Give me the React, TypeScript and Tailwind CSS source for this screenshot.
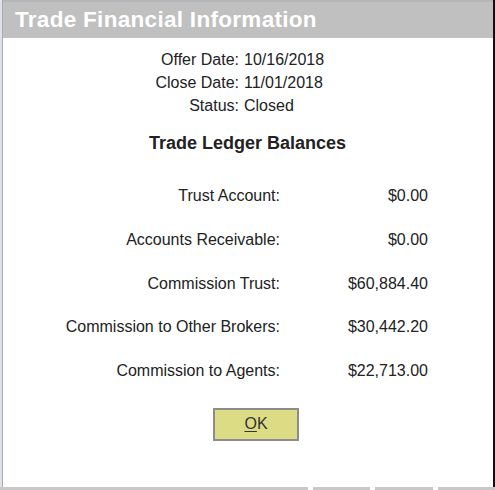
import React from 'react';

const ledger = [
    { label: 'Trust Account:', value: '$0.00' },
    { label: 'Accounts Receivable:', value: '$0.00' },
    { label: 'Commission Trust:', value: '$60,884.40' },
    { label: 'Commission to Other Brokers:', value: '$30,442.20' },
    { label: 'Commission to Agents:', value: '$22,713.00' },
];

const info = [
    { label: 'Offer Date:', value: '10/16/2018' },
    { label: 'Close Date:', value: '11/01/2018' },
    { label: 'Status:', value: 'Closed' },
];

export default function App() {
    return (
        <div className="w-[495px] h-[490px] flex flex-col bg-white overflow-hidden" style={{ fontFamily: '"Liberation Sans", Arial, sans-serif' }}>
            <div className="flex flex-1 min-h-0">
                <div className="w-[2px] bg-[#dde1e8]" />
                <div className="w-px bg-[#a9abb0]" />
                <div className="flex-1 flex flex-col">
                    {/* Title bar */}
                    <div className="h-[38px] bg-[#c0c0c0] border-t-2 border-[#b4b6ba] flex items-center pl-[12px]">
                        <h1 className="text-white font-bold text-[22.5px] leading-none tracking-[0.3px]">Trade Financial Information</h1>
                    </div>

                    {/* Trade details */}
                    <div className="mt-[9.5px] flex flex-col text-[16px] text-[#222] leading-[23px]">
                        {info.map((row) => (
                            <div key={row.label} className="flex gap-[5px]">
                                <span className="w-[236px] text-right">{row.label}</span>
                                <span>{row.value}</span>
                            </div>
                        ))}
                    </div>

                    <h2 className="mt-[16.5px] text-center font-bold text-[18px] text-[#222] leading-[20px] pr-[1px]">Trade Ledger Balances</h2>

                    {/* Ledger balances */}
                    <div className="mt-[32.4px] flex flex-col gap-[21.7px] text-[16px] text-[#222] leading-[22px]">
                        {ledger.map((row) => (
                            <div key={row.label} className="flex">
                                <span className="w-[277px] text-right">{row.label}</span>
                                <span className="w-[148px] text-right">{row.value}</span>
                            </div>
                        ))}
                    </div>

                    <div className="mt-[25.8px] flex pl-[210px]">
                        <button className="w-[86px] h-[33px] bg-[#dcdc84] border-2 border-[#8c8c8c] text-[16px] text-[#333] leading-none">
                            <span className="underline underline-offset-2">O</span>K
                        </button>
                    </div>
                </div>
                <div className="w-[2px] bg-[#111]" />
            </div>
            {/* Bottom edge */}
            <div className="h-[3px] flex gap-[5px] bg-white">
                <div className="w-[308px] bg-[#c8c8c8]" />
                <div className="w-[57px] bg-[#c8c8c8]" />
                <div className="w-[58px] bg-[#c8c8c8]" />
                <div className="w-[57px] bg-[#c8c8c8]" />
            </div>
        </div>
    );
}
